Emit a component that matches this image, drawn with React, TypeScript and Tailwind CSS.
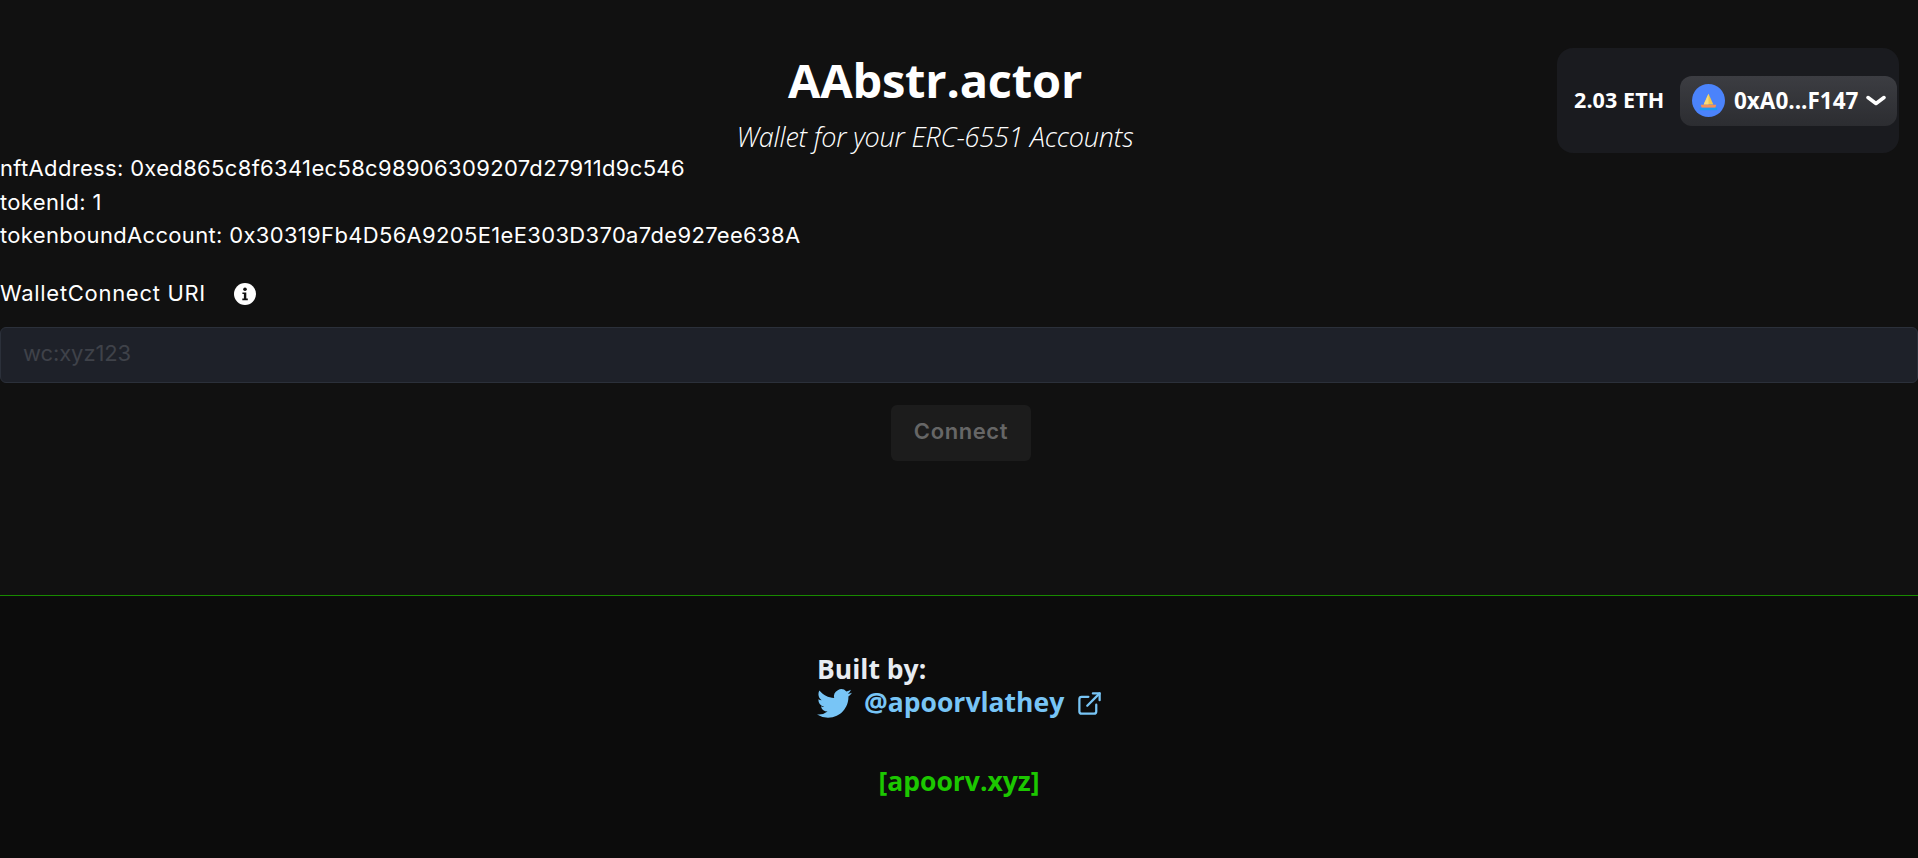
import React from "react";

const poppins = "font-['Inter','Noto_Sans',sans-serif]";

function Twitter() {
  return (
    <svg viewBox="0 0 24 24" className="w-[35px] h-[35px] fill-[#78c5f6] shrink-0">
      <path d="M23.95 4.57a10 10 0 0 1-2.82.77 4.96 4.96 0 0 0 2.16-2.72c-.95.55-2 .96-3.12 1.19a4.92 4.92 0 0 0-8.38 4.48C7.69 8.1 4.07 6.13 1.64 3.16a4.82 4.82 0 0 0-.66 2.48c0 1.71.87 3.21 2.19 4.1a4.9 4.9 0 0 1-2.23-.62v.06a4.92 4.92 0 0 0 3.95 4.83c-.72.19-1.49.22-2.22.08a4.94 4.94 0 0 0 4.6 3.42A9.87 9.87 0 0 1 0 19.54a13.94 13.94 0 0 0 7.55 2.21c9.05 0 14-7.5 14-13.98 0-.21 0-.42-.02-.63a9.94 9.94 0 0 0 2.46-2.55z" />
    </svg>
  );
}

function ExternalLink() {
  return (
    <svg viewBox="0 0 24 24" fill="none" stroke="#78c5f6" strokeWidth="2" strokeLinecap="round" strokeLinejoin="round" className="w-[27px] h-[27px] shrink-0">
      <path d="M18 13v6a2 2 0 0 1-2 2H5a2 2 0 0 1-2-2V8a2 2 0 0 1 2-2h6" />
      <path d="M15 3h6v6" />
      <path d="M10 14 21 3" />
    </svg>
  );
}

function Boat() {
  return (
    <svg viewBox="0 0 34 34" className="w-[33px] h-[33px] shrink-0">
      <circle cx="17" cy="17" r="17" fill="#4b83fb" />
      <path d="M17 10 L22 21 H12 Z" fill="#f2c94c" />
      <path d="M17 10 V21 H12 Z" fill="#f7dc7a" />
      <path d="M9 21.5 H25 L24 24.5 H10 Z" fill="#f2925a" />
      <rect x="8" y="24.5" width="18" height="2.5" fill="#1e9bf0" />
    </svg>
  );
}

export default function App() {
  return (
    <div className="relative w-full h-[858px] overflow-hidden bg-[#111111] text-white font-['Open_Sans',sans-serif]">
      <div className="absolute left-[1557px] top-[48px] w-[342px] h-[105px] rounded-[16px] bg-[#1a1b1f] flex items-center pl-[17px] pr-[2px] justify-between">
        <span className="text-[21.5px] font-bold whitespace-nowrap tracking-[0.1px]">2.03 ETH</span>
        <div className="h-[50px] w-[217px] rounded-[12px] bg-gradient-to-b from-[#3c3d42] to-[#2c2d31] flex items-center pl-[12px]">
          <Boat />
          <span className="ml-[9px] text-[22.5px] font-bold whitespace-nowrap">0xA0...F147</span>
          <svg viewBox="0 0 20 12" className="ml-[8px] w-[20px] h-[12px]" fill="none" stroke="white" strokeWidth="3.5" strokeLinecap="round" strokeLinejoin="round">
            <path d="M2 2.5 L10 8.5 L18 2.5" />
          </svg>
        </div>
      </div>

      <main className="h-[595px]">
        <header className="pt-[46px] pr-[48px] text-center">
          <h1 className="text-[47px] leading-[68px] font-bold tracking-[-0.2px]">AAbstr.actor</h1>
          <p className="mt-[6px] text-[27px] leading-[34px] italic font-light tracking-[-0.2px]">Wallet for your ERC-6551 Accounts</p>
        </header>

        <section className={`${poppins} text-[22px] leading-[33.6px] -mt-[2px] tracking-[0.33px]`}>
          <div>nftAddress: 0xed865c8f6341ec58c98906309207d27911d9c546</div>
          <div>tokenId: 1</div>
          <div>tokenboundAccount: 0x30319Fb4D56A9205E1eE303D370a7de927ee638A</div>
        </section>

        <div className={`${poppins} mt-[24px] flex items-center h-[34px]`}>
          <span className="text-[22px] tracking-[0.7px]">WalletConnect URI</span>
          <svg viewBox="0 0 22 22" className="ml-[28px] w-[22px] h-[22px]">
            <circle cx="11" cy="11" r="11" fill="white" />
            <circle cx="11" cy="6.2" r="1.8" fill="#111" />
            <path d="M8.4 9.4h3.9v6.2h1.5v1.7H8.3v-1.7h1.6v-4.5H8.4z" fill="#111" />
          </svg>
        </div>

        <div className="mt-[16px] h-[56px] w-[1918px] rounded-[6px] border border-[#2b303a] bg-[#1e2129] flex items-center pl-[22px] pb-[3px]">
          <span className={`${poppins} text-[22px] text-[#3f4249] tracking-[-0.1px]`}>wc:xyz123</span>
        </div>

        <div className="mt-[22px] flex justify-center pl-[4px]">
          <button className={`${poppins} w-[140px] h-[56px] pb-[3px] rounded-[6px] bg-[#1c1c1c] text-[22px] tracking-[0.6px] font-semibold text-[#666666]`}>
            Connect
          </button>
        </div>
      </main>

      <footer className="h-[263px] border-t border-[#188a00] bg-[#0c0c0c] pt-[56px] flex flex-col items-center">
        <div className="w-[287px] ml-[3px]">
          <div className="text-[26.5px] leading-[34px] font-bold text-[#e8ecf2]">Built by:</div>
          <div className="flex items-center h-[34px]">
            <Twitter />
            <span className="ml-[12px] text-[26.5px] font-bold text-[#78c5f6] whitespace-nowrap">@apoorvlathey</span>
            <span className="ml-[12px]"><ExternalLink /></span>
          </div>
        </div>
        <div className="mt-[44px] text-[26.5px] leading-[34px] font-bold text-[#1cc700]">[apoorv.xyz]</div>
      </footer>
    </div>
  );
}
